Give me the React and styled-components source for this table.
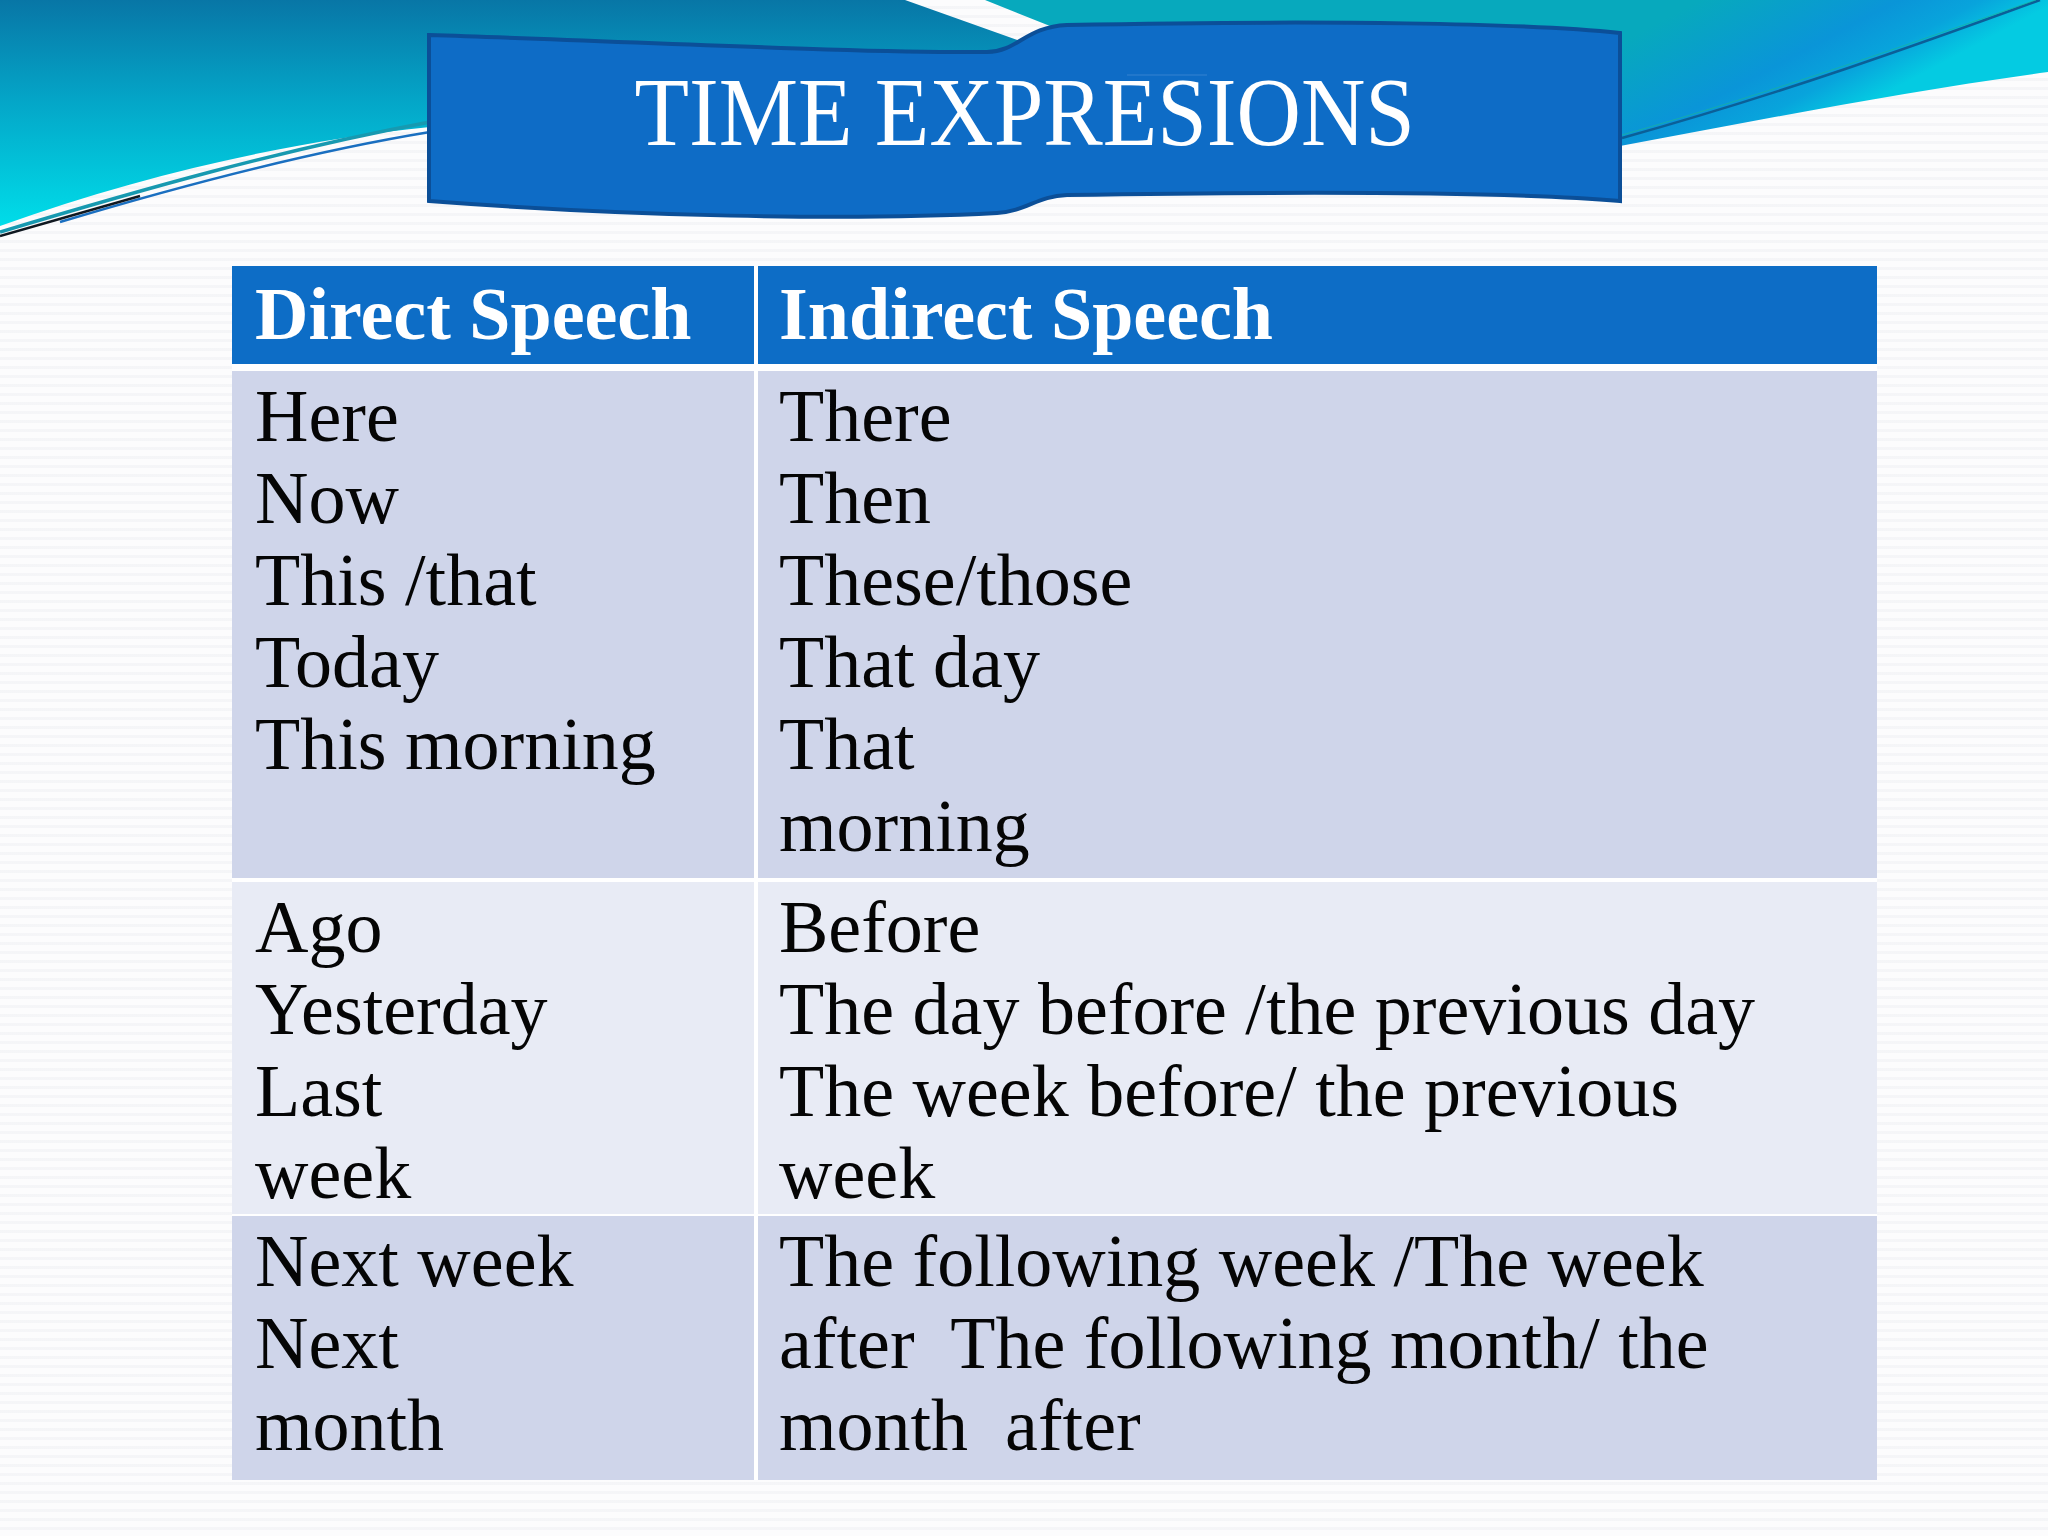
import React from 'react'
import styled, { createGlobalStyle } from 'styled-components'

const GlobalStyle = createGlobalStyle`
  html, body {
    margin: 0;
    padding: 0;
  }
  body {
    width: 2048px;
    height: 1536px;
    overflow: hidden;
    background-color: #fcfcfd;
    background-image: repeating-linear-gradient(
      to bottom,
      transparent 0 6px,
      rgba(160, 168, 186, 0.08) 6px 9px
    );
    font-family: "Liberation Serif", "Times New Roman", serif;
  }
`

const rows = [
    {
        tone: 'dark',
        height: 507,
        left: ['Here', 'Now', 'This /that', 'Today', 'This morning'],
        right: ['There', 'Then', 'These/those', 'That day', 'That', 'morning'],
    },
    {
        tone: 'light',
        height: 330,
        left: ['Ago', 'Yesterday', 'Last', 'week'],
        right: ['Before', 'The day before /the previous day', 'The week before/ the previous', 'week'],
    },
    {
        tone: 'dark',
        height: 264,
        left: ['Next week', 'Next', 'month'],
        right: ['The following week /The week', 'after  The following month/ the', 'month  after'],
    },
]

function TopWave() {
    return (
        <WaveArt viewBox="0 0 2048 260" width="2048" height="260">
            <defs>
                <linearGradient id="leftSea" x1="0" y1="0" x2="0" y2="226" gradientUnits="userSpaceOnUse">
                    <stop offset="0" stopColor="#0876a6" />
                    <stop offset="0.45" stopColor="#04a6c8" />
                    <stop offset="1" stopColor="#00dde9" />
                </linearGradient>
                <linearGradient id="rightSea" x1="1700" y1="0" x2="1780" y2="150" gradientUnits="userSpaceOnUse">
                    <stop offset="0" stopColor="#07a9bd" />
                    <stop offset="0.55" stopColor="#0a95d8" />
                    <stop offset="0.78" stopColor="#08a4dc" />
                    <stop offset="1" stopColor="#04cbe2" />
                </linearGradient>
            </defs>
            <path
                d="M0 0 L905 0 L1040 48 L1000 70 L430 127 C300 140 150 172 0 226 Z"
                fill="url(#leftSea)"
            />
            <path
                d="M985 0 L2048 0 L2048 72 C1900 92 1760 120 1620 146 L1300 120 L1050 26 Z"
                fill="url(#rightSea)"
            />
            <path d="M1622 138 C1780 94 1920 44 2040 0" stroke="#0b5f98" strokeWidth="2.5" fill="none" />
            <path d="M1622 135 C1780 90 1920 40 2036 0" stroke="#19b39a" strokeWidth="1" fill="none" opacity="0.7" />
            <path d="M0 232 C140 190 280 150 430 122" stroke="#1799b0" strokeWidth="3.5" fill="none" />
            <path d="M60 222 C200 180 320 150 430 132" stroke="#1a6fc0" strokeWidth="2.5" fill="none" />
            <path d="M0 236 C50 222 90 210 140 196" stroke="#101820" strokeWidth="2.5" fill="none" />
        </WaveArt>
    )
}

function BannerShape() {
    return (
        <BannerArt viewBox="0 0 1195 210" width="1195" height="210">
            <path
                d="M2 20
                   C200 26 420 38 560 37
                   C592 36 598 12 640 10
                   C900 5 1100 8 1193 18
                   L1193 186
                   C1100 178 900 176 640 180
                   C610 181 600 196 570 198
                   C420 206 200 201 2 186 Z"
                fill="#0e6cc6"
                stroke="#0b4f98"
                strokeWidth="4"
            />
            <path d="M700 60 L780 60" stroke="#3a86d2" strokeWidth="1.5" opacity="0.6" />
        </BannerArt>
    )
}

function App() {
    return (
        <>
            <GlobalStyle />
            <Page>
                <TopWave />
                <Header>
                    <Banner>
                        <BannerShape />
                        <Title>TIME EXPRESIONS</Title>
                    </Banner>
                </Header>
                <Table>
                    <HeaderRow>
                        <HeaderCell $inset={23}>Direct Speech</HeaderCell>
                        <HeaderCell $inset={21}>Indirect Speech</HeaderCell>
                    </HeaderRow>
                    {rows.map((row, i) => (
                        <Row key={i} $height={row.height}>
                            <Cell $tone={row.tone} $inset={23}>
                                {row.left.map((line, j) => (
                                    <Line key={j}>{line}</Line>
                                ))}
                            </Cell>
                            <Cell $tone={row.tone} $inset={21}>
                                {row.right.map((line, j) => (
                                    <Line key={j}>{line}</Line>
                                ))}
                            </Cell>
                        </Row>
                    ))}
                </Table>
            </Page>
        </>
    )
}

const Page = styled.div`
    position: relative;
    width: 2048px;
    height: 1536px;
    overflow: hidden;
`

const WaveArt = styled.svg`
    position: absolute;
    top: 0;
    left: 0;
    display: block;
`

const Header = styled.header`
    position: relative;
    display: flex;
    padding: 15px 0 0 427px;
`

const Banner = styled.div`
    position: relative;
    width: 1195px;
    height: 210px;
    display: flex;
    justify-content: center;
    align-items: flex-start;
`

const BannerArt = styled.svg`
    position: absolute;
    top: 0;
    left: 0;
    display: block;
`

const Title = styled.h1`
    position: relative;
    margin: 0;
    padding-top: 48px;
    font-family: "Liberation Serif", "Times New Roman", serif;
    font-weight: normal;
    font-size: 98px;
    line-height: 98px;
    color: #ffffff;
    white-space: nowrap;
    transform: scaleX(0.91);
`

const Table = styled.div`
    position: relative;
    display: flex;
    flex-direction: column;
    gap: 4px;
    width: 1645px;
    margin: 41px 0 0 232px;
    background: #ffffff;
`

const HeaderRow = styled.div`
    display: grid;
    grid-template-columns: 522px 1119px;
    column-gap: 4px;
    height: 98px;
    margin-bottom: 3px;
`

const HeaderCell = styled.div`
    background: #0d6dc6;
    color: #ffffff;
    font-weight: bold;
    font-size: 74px;
    line-height: 96px;
    padding-left: ${(props) => props.$inset}px;
    white-space: nowrap;
`

const Row = styled.div`
    display: grid;
    grid-template-columns: 522px 1119px;
    column-gap: 4px;
    height: ${(props) => props.$height}px;
`

const Cell = styled.div`
    background: ${(props) => (props.$tone === 'light' ? '#e8ebf5' : '#cfd5ea')};
    color: #050505;
    font-size: 74px;
    line-height: 82px;
    padding: 4px 0 0 ${(props) => props.$inset}px;
`

const Line = styled.div`
    white-space: pre;
`

export default App
